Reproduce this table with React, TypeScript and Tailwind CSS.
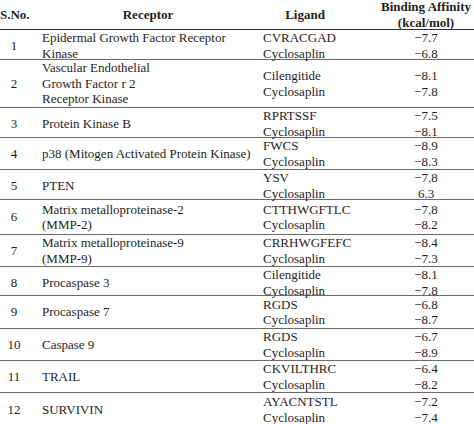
type Row = {
  no: string;
  receptor: string[];
  ligands: [string, string][];
  h: string;
};

const rows: Row[] = [
  { no: "1", receptor: ["Epidermal Growth Factor Receptor", "Kinase"], ligands: [["CVRACGAD", "−7.7"], ["Cyclosaplin", "−6.8"]], h: "h-[30px]" },
  { no: "2", receptor: ["Vascular Endothelial", "Growth Factor r 2", "Receptor Kinase"], ligands: [["Cilengitide", "−8.1"], ["Cyclosaplin", "−7.8"]], h: "h-[48px]" },
  { no: "3", receptor: ["Protein Kinase B"], ligands: [["RPRTSSF", "−7.5"], ["Cyclosaplin", "−8.1"]], h: "h-[30px]" },
  { no: "4", receptor: ["p38 (Mitogen Activated Protein Kinase)"], ligands: [["FWCS", "−8.9"], ["Cyclosaplin", "−8.3"]], h: "h-[32px]" },
  { no: "5", receptor: ["PTEN"], ligands: [["YSV", "−7.8"], ["Cyclosaplin", "6.3"]], h: "h-[30px]" },
  { no: "6", receptor: ["Matrix metalloproteinase-2", "(MMP-2)"], ligands: [["CTTHWGFTLC", "−7.8"], ["Cyclosaplin", "−8.2"]], h: "h-[35px]" },
  { no: "7", receptor: ["Matrix metalloproteinase-9", "(MMP-9)"], ligands: [["CRRHWGFEFC", "−8.4"], ["Cyclosaplin", "−7.3"]], h: "h-[32px]" },
  { no: "8", receptor: ["Procaspase 3"], ligands: [["Cilengitide", "−8.1"], ["Cyclosaplin", "−7.8"]], h: "h-[29px]" },
  { no: "9", receptor: ["Procaspase 7"], ligands: [["RGDS", "−6.8"], ["Cyclosaplin", "−8.7"]], h: "h-[33px]" },
  { no: "10", receptor: ["Caspase 9"], ligands: [["RGDS", "−6.7"], ["Cyclosaplin", "−8.9"]], h: "h-[32px]" },
  { no: "11", receptor: ["TRAIL"], ligands: [["CKVILTHRC", "−6.4"], ["Cyclosaplin", "−8.2"]], h: "h-[32px]" },
  { no: "12", receptor: ["SURVIVIN"], ligands: [["AYACNTSTL", "−7.2"], ["Cyclosaplin", "−7.4"]], h: "h-[34px]" },
];

const cols = "grid grid-cols-[28px_230px_94px_148px]";

export default function App() {
  return (
    <div className="w-[474px] h-[424px] overflow-hidden bg-white text-[#1e1e1e] text-[13px] leading-[15.5px] [font-family:Liberation_Serif,serif]">
      <div className="w-[500px]">
        {/* header */}
        <div className={`${cols} h-[30px] border-b-[1.5px] border-[#333] font-bold items-center`}>
          <div className="text-center">S.No.</div>
          <div className="text-center pl-[10px]">Receptor</div>
          <div className="text-center">Ligand</div>
          <div className="text-center self-start -mt-[1px]">
            <div>Binding Affinity</div>
            <div>(kcal/mol)</div>
          </div>
        </div>

        {rows.map(r => (
          <div key={r.no} className={`${cols} ${r.h} border-b-[1.5px] border-[#6a6a6a] items-center`}>
            <div className="text-center">{r.no}</div>
            <div className="pl-[14px] whitespace-nowrap">
              {r.receptor.map(t => <div key={t}>{t}</div>)}
            </div>
            <div className="pl-[5px]">
              {r.ligands.map(([l]) => <div key={l}>{l}</div>)}
            </div>
            <div className="text-center">
              {r.ligands.map(([l, v]) => <div key={l}>{v}</div>)}
            </div>
          </div>
        ))}
      </div>
    </div>
  );
}
